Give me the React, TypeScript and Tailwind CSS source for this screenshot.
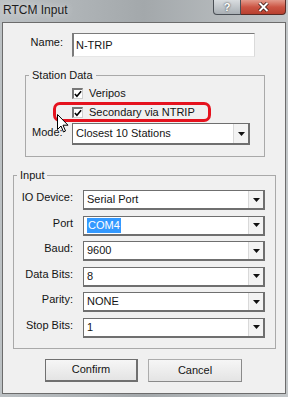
import React from "react";

const font = "font-['Liberation_Sans',Arial,sans-serif]";

function Arrow() {
  return (
    <svg width="7" height="4" viewBox="0 0 7 4">
      <polygon points="0,0 7,0 3.5,4" fill="#111" />
    </svg>
  );
}

function Combo({
  value,
  width,
  height = 20,
  selected = false,
}: {
  value: string;
  width: number;
  height?: number;
  selected?: boolean;
}) {
  return (
    <div
      className="flex border-t border-l border-r-2 border-b-2 border-[#6f6f6f] bg-white"
      style={{ width, height }}
    >
      <div className="flex flex-1 items-center pl-[3px]">
        {selected ? (
          <span className="bg-[#3399ff] px-[1px] leading-[15px] text-white">{value}</span>
        ) : (
          <span>{value}</span>
        )}
      </div>
      <div className="flex w-[15px] items-center justify-center border-l border-[#d9d9d9] bg-[#f3f3f3]">
        <Arrow />
      </div>
    </div>
  );
}

function Check({ label }: { label: string }) {
  return (
    <div className="flex h-[14px] items-center gap-[6px] pl-[46px]">
      <div className="flex h-[11px] w-[11px] items-center justify-center border border-t-2 border-l-2 border-[#777] border-r-[#cfcfcf] border-b-[#cfcfcf] bg-white">
        <svg width="9" height="8" viewBox="0 0 9 8">
          <path d="M1 4 L3.3 6.5 L8 1" stroke="#000" strokeWidth="1.8" fill="none" />
        </svg>
      </div>
      <span>{label}</span>
    </div>
  );
}

function Row({ label, value, selected }: { label: string; value: string; selected?: boolean }) {
  return (
    <div className="flex items-start gap-[10px]">
      <div className="w-[59px] text-right leading-[14px]">{label}</div>
      <Combo value={value} width={182} selected={selected} />
    </div>
  );
}

export default function App() {
  const rows = [
    { label: "IO Device:", value: "Serial Port" },
    { label: "Port", value: "COM4", selected: true },
    { label: "Baud:", value: "9600" },
    { label: "Data Bits:", value: "8" },
    { label: "Parity:", value: "NONE" },
    { label: "Stop Bits:", value: "1" },
  ];

  return (
    <div
      className={`${font} relative flex h-[397px] w-[288px] flex-col overflow-hidden bg-gradient-to-r from-[#bcc1c4] via-[#a3a8ab] to-[#c3c7c9] text-[11px] text-[#141414]`}
    >
      {/* title bar */}
      <div className="flex h-[22px] shrink-0 items-start">
        <div className="pl-[3px] pt-[2px] text-[12px] leading-[16px] text-[#1c1c1c] [text-shadow:0_0_6px_#e8e8e8]">
          RTCM Input
        </div>
        <div className="ml-auto mr-[2px] flex">
          <div className="flex h-[15px] w-[28px] items-center justify-center rounded-bl-[4px] border border-t-0 border-[#4a4f55] bg-gradient-to-b from-[#d9dde0] to-[#a9afb4] text-[11px] font-bold leading-none text-white [text-shadow:0_0_2px_#222]">
            ?
          </div>
          <div className="flex h-[15px] w-[45px] items-center justify-center rounded-br-[4px] border border-l-0 border-t-0 border-[#5a2a24] bg-gradient-to-b from-[#e29a8c] via-[#cc5544] to-[#b8402f]">
            <svg width="11" height="10" viewBox="0 0 11 10">
              <path d="M1.5 1 L9.5 9 M9.5 1 L1.5 9" stroke="#3a1a16" strokeWidth="3.6" />
              <path d="M1.5 1 L9.5 9 M9.5 1 L1.5 9" stroke="#fff" strokeWidth="2" />
            </svg>
          </div>
        </div>
      </div>

      {/* client panel */}
      <div className="mx-[2px] mb-[3px] flex flex-1 flex-col border border-[#6c6c6c] bg-[#f0f0f0]">
        <div className="mt-[10px] flex items-start gap-[9px]">
          <div className="mt-[2px] w-[60px] text-right leading-[14px]">Name:</div>
          <div className="flex h-[24px] w-[183px] items-center border-l-2 border-t border-r border-b border-[#7b7b7b] border-r-[#dadada] border-b-[#e6e6e6] bg-white pl-[2px]">
            N-TRIP
          </div>
        </div>

        <fieldset className="ml-[22px] mt-[11px] w-[240px] border border-[#a9a9a9] pb-[11px]">
          <legend className="ml-[3px] px-[3px] leading-[14px]">Station Data</legend>
          <div className="mt-[4px] flex flex-col gap-[5px]">
            <Check label="Veripos" />
            <Check label="Secondary via NTRIP" />
          </div>
          <div className="mt-[4px] flex items-start">
            <div className="ml-[6px] mt-[2px] w-[40px] leading-[14px]">Mode:</div>
            <Combo value="Closest 10 Stations" width={178} height={22} />
          </div>
        </fieldset>

        <fieldset className="ml-[10px] mt-[11px] w-[263px] border border-[#a9a9a9] pb-[10px]">
          <legend className="ml-[3px] px-[3px] leading-[14px]">Input</legend>
          <div className="mt-[8px] flex flex-col gap-[5.5px]">
            {rows.map((r) => (
              <Row key={r.label} label={r.label} value={r.value} selected={r.selected} />
            ))}
          </div>
        </fieldset>

        <div className="ml-[42px] mt-[10px] flex gap-[10px]">
          <button className="h-[23px] w-[93px] border border-[#707070] border-r-2 border-b-2 bg-gradient-to-b from-[#f6f6f6] to-[#e4e4e4] text-[11px]">
            Confirm
          </button>
          <button className="h-[23px] w-[94px] border border-[#acacac] border-r-[#8a8a8a] border-b-[#8a8a8a] bg-gradient-to-b from-[#f6f6f6] to-[#e4e4e4] text-[11px]">
            Cancel
          </button>
        </div>
      </div>

      {/* annotation highlight */}
      <div className="absolute left-[53px] top-[102px] h-[20px] w-[158px] rounded-[7px] border-[3px] border-[#e5121e]" />
      {/* mouse cursor */}
      <svg className="absolute left-[57px] top-[114px]" width="12" height="19" viewBox="0 0 12 19">
        <path
          d="M0.5 0.5 L0.5 15.5 L4 12 L6.5 18 L8.5 17 L6 11.2 L11 11.2 Z"
          fill="#fff"
          stroke="#000"
          strokeWidth="1"
          strokeLinejoin="round"
        />
      </svg>
    </div>
  );
}
